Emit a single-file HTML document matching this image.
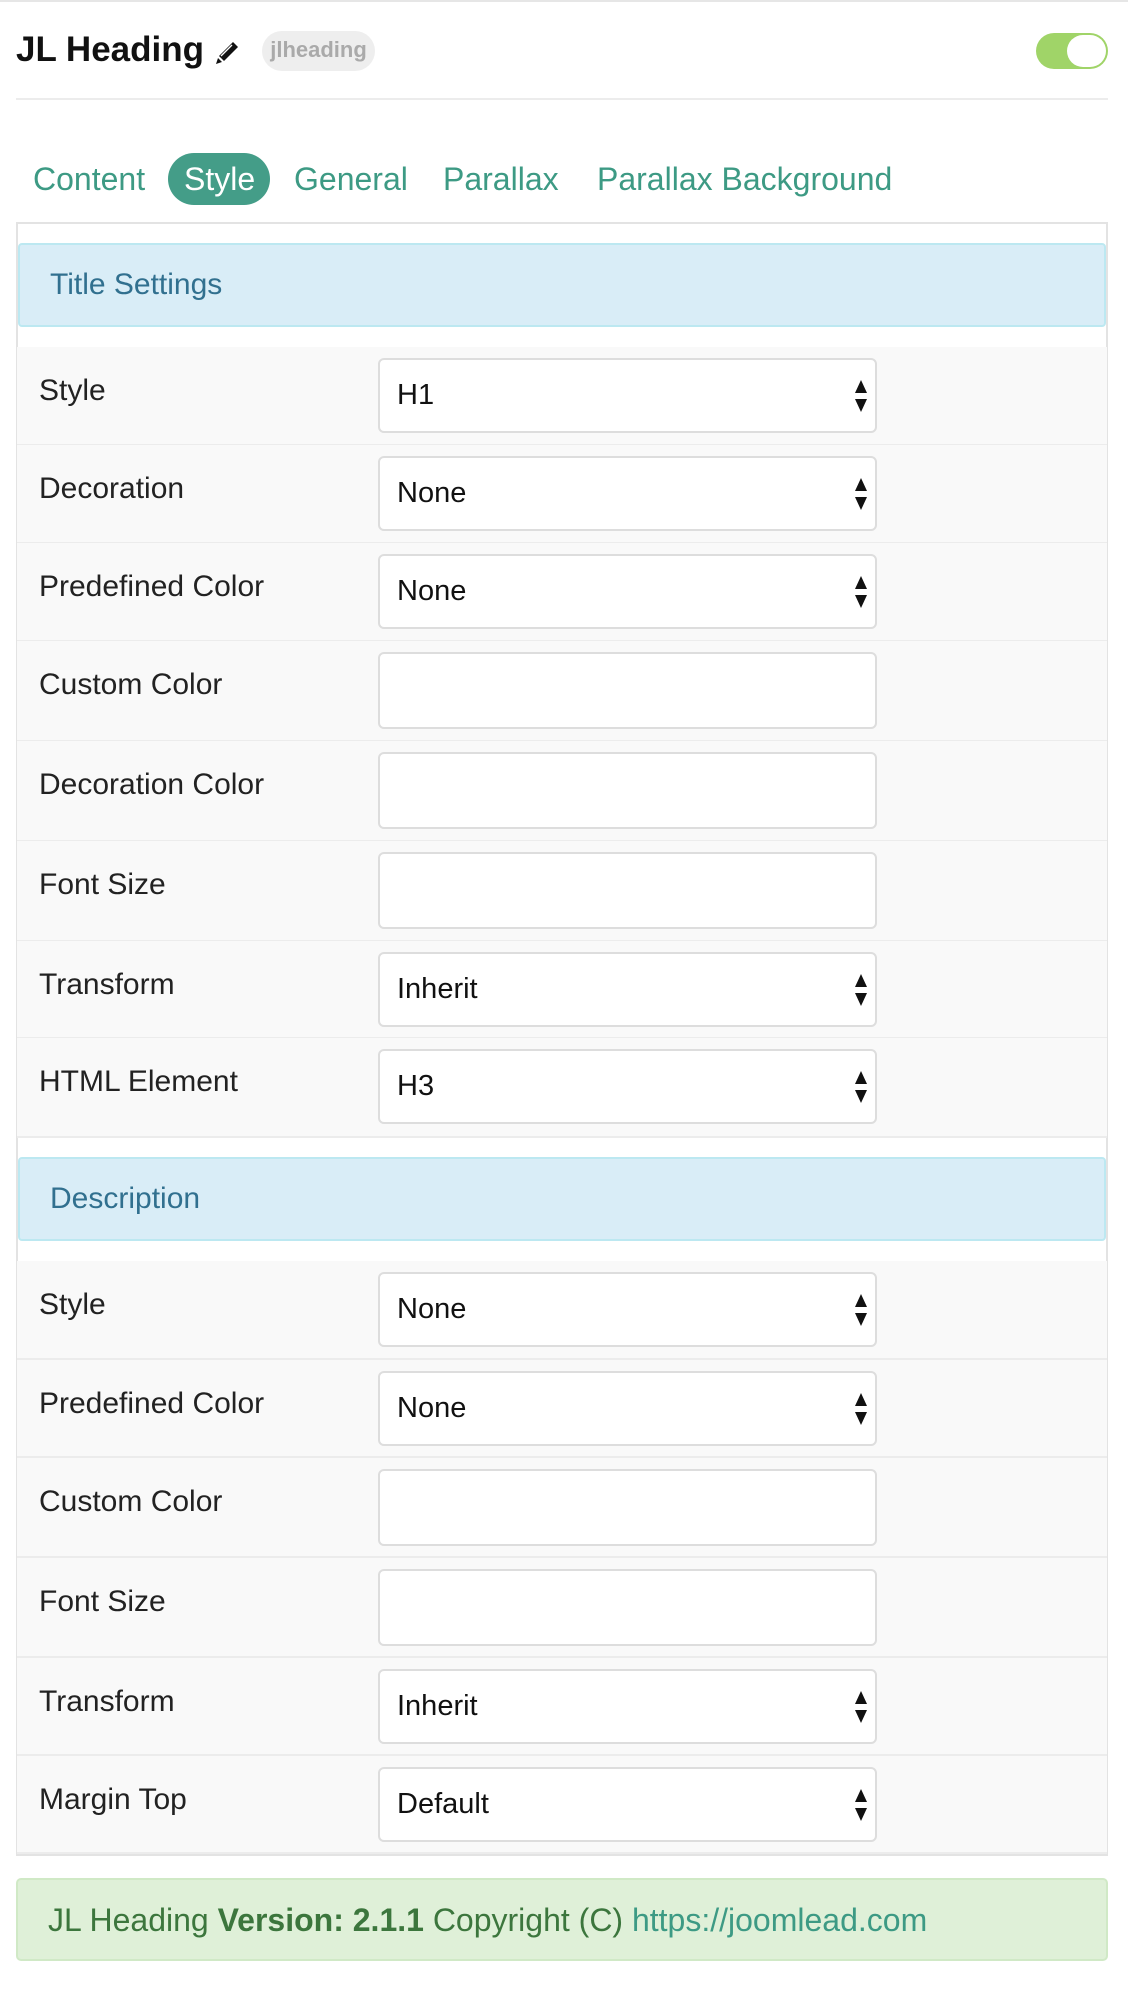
<!DOCTYPE html>
<html><head><meta charset="utf-8"><style>
*{box-sizing:border-box;margin:0;padding:0}
body{width:1128px;height:1999px;background:#fff;font-family:"Liberation Sans",Arial,sans-serif;position:relative;overflow:hidden;color:#222}
.a{position:absolute}
.row{position:absolute;left:17px;width:1090px;background:#f9f9f9;border-bottom:2px solid #ececec}
.lbl{position:absolute;left:22px;font-size:30px;color:#222}
.ctl{position:absolute;left:361px;width:499px;height:75px;background:#fff;border:2px solid #ddd;border-radius:6px}
.ctl span{position:absolute;left:17px;top:19px;font-size:29px;color:#111}
.arr{position:absolute;right:7px;top:20px;width:14px;height:33px}
.hdr{position:absolute;left:18px;width:1088px;height:84px;background:#d9edf7;border:2px solid #bce8f1;border-radius:4px;font-size:30px;color:#31708f;padding-left:30px;line-height:80px}
.tab{position:absolute;top:161px;font-size:32px;color:#3d9a84}
</style></head><body>
<div class="a" style="left:0;top:0;width:1128px;height:2px;background:#e6e6e6"></div>
<div class="a" style="left:16px;top:30px;font-size:35px;font-weight:bold;color:#111">JL Heading</div>
<svg class="a" style="left:216px;top:41px" width="23" height="23" viewBox="0 0 23 23"><path d="M17 1 L22 6 L8 20 L3 15 Z" fill="#111"/><path d="M2 17 L6 21 L0 23 Z" fill="#111"/><path d="M5 15 L16 4" stroke="#fff" stroke-width="1.3"/></svg>
<div class="a" style="left:262px;top:31px;width:113px;height:40px;border-radius:20px;background:#eee;color:#aaa;font-size:22px;font-weight:bold;text-align:center;line-height:38px">jlheading</div>
<div class="a" style="left:1036px;top:33px;width:72px;height:36px;border-radius:18px;background:#a0d468"></div>
<div class="a" style="left:1067px;top:35px;width:39px;height:32px;border-radius:16px;background:#fff"></div>
<div class="a" style="left:16px;top:98px;width:1092px;height:2px;background:#ececec"></div>
<div class="tab" style="left:33px">Content</div>
<div class="a" style="left:168px;top:153px;width:102px;height:52px;border-radius:26px;background:#449d88"></div>
<div class="tab" style="left:184px;color:#fff">Style</div>
<div class="tab" style="left:294px">General</div>
<div class="tab" style="left:443px">Parallax</div>
<div class="tab" style="left:597px">Parallax Background</div>
<div class="a" style="left:16px;top:222px;width:1092px;height:1634px;border:2px solid #e3e3e3;border-bottom:4px solid #e3e3e3"></div>
<div class="hdr" style="top:243px">Title Settings</div>
<div class="hdr" style="top:1157px">Description</div>
<div class="a" style="left:16px;top:1878px;width:1092px;height:83px;background:#dff0d8;border:2px solid #d0e9c6;border-radius:5px;font-size:32px;color:#3c763d;padding-left:30px;line-height:80px;white-space:nowrap">JL Heading <b>Version: 2.1.1</b> Copyright (C) <span style="color:#3d9a84">https://joomlead.com</span></div>
<div id="rows"></div>
<script>
var R=[[347,97,"Style","H1"],[445,97,"Decoration","None"],[543,97,"Predefined Color","None"],[641,99,"Custom Color",null],[741,99,"Decoration Color",null],[841,99,"Font Size",null],[941,96,"Transform","Inherit"],[1038,98,"HTML Element","H3"],
[1261,97,"Style","None"],[1360,96,"Predefined Color","None"],[1458,98,"Custom Color",null],[1558,98,"Font Size",null],[1658,96,"Transform","Inherit"],[1756,96,"Margin Top","Default"]];
var h="";
R.forEach(function(r){
h+='<div class="row" style="top:'+r[0]+'px;height:'+(r[1]+2)+'px"><div class="lbl" style="top:27px">'+r[2]+'</div><div class="ctl" style="top:11px;height:'+(r[3]?75:77)+'px">'+(r[3]?'<span>'+r[3]+'</span><svg class="arr" viewBox="0 0 14 33"><path d="M7 0 L13 13 L1 13Z M1 19 L13 19 L7 32Z" fill="#111"/></svg>':'')+'</div></div>';
});
document.getElementById("rows").innerHTML=h;
</script>
</body></html>
